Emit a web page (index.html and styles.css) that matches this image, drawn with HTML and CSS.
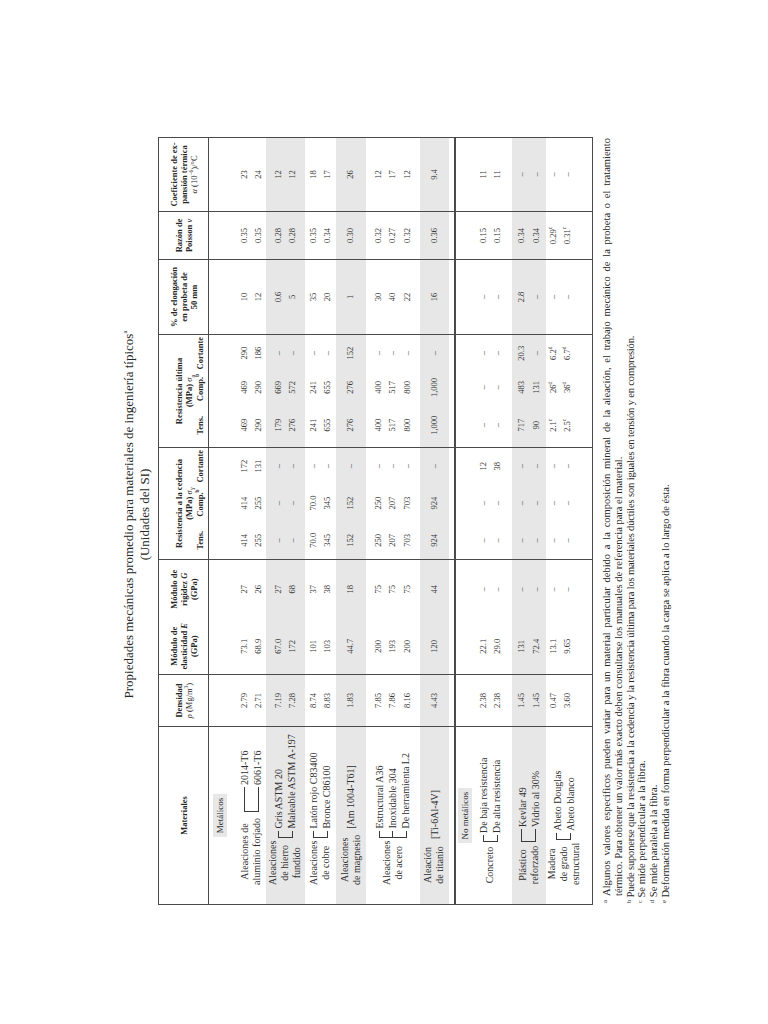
FILE: index.html
```html
<!DOCTYPE html>
<html lang="es">
<head>
<meta charset="utf-8">
<title>Propiedades mecánicas promedio</title>
<link rel="stylesheet" href="styles.css">
</head>
<body>
<div class="viewport">
<div class="sheet">
<div class="content">
  <div class="title">Propiedades mecánicas promedio para materiales de ingeniería típicos<sup class="ts">a</sup><br>(Unidades del SI)</div>
  <table class="props">
    <colgroup>
      <col class="c-mat"><col class="c-den"><col class="c-e"><col class="c-g">
      <col class="c-ct"><col class="c-cc"><col class="c-cs">
      <col class="c-ut"><col class="c-uc"><col class="c-us">
      <col class="c-el"><col class="c-po"><col class="c-co">
    </colgroup>
    <thead>
      <tr class="h1">
        <th rowspan="2" class="hb">Materiales</th>
        <th rowspan="2" class="hb bl">Densidad<br><span class="n"><i>ρ</i> (Mg/m<sup>3</sup>)</span></th>
        <th rowspan="2" class="hb bl">Módulo de<br>elasticidad <i>E</i><br>(GPa)</th>
        <th rowspan="2" class="hb">Módulo de<br>rigidez <i>G</i><br>(GPa)</th>
        <th colspan="3" class="bl grp">Resistencia a la cedencia<br>(MPa) <i class="n">σ<sub>Y</sub></i></th>
        <th colspan="3" class="bl grp">Resistencia última<br>(MPa) <i class="n">σ<sub>u</sub></i></th>
        <th rowspan="2" class="hb bl">% de elongación<br>en probeta de<br>50 mm</th>
        <th rowspan="2" class="hb bl">Razón de<br>Poisson <i class="n">ν</i></th>
        <th rowspan="2" class="hb bl">Coeficiente de ex-<br>pansión térmica<br><span class="n"><i>α</i> (10<sup>−6</sup>)/°C</span></th>
      </tr>
      <tr class="h2">
        <th class="hb bl sub">Tens.</th><th class="hb sub">Comp.<sup>b</sup></th><th class="hb sub">Cortante</th>
        <th class="hb bl sub">Tens.</th><th class="hb sub">Comp.<sup>b</sup></th><th class="hb sub">Cortante</th>
      </tr>
    </thead>
    <tbody>
      <tr class="r-sec">
        <td><span class="sec">Metálicos</span></td>
        <td></td><td></td><td></td><td></td><td></td><td></td><td></td><td></td><td></td><td></td><td></td><td></td>
      </tr>
      <tr class="r-al">
        <td><div class="m"><div class="ml">Aleaciones de<br>aluminio forjado</div><div class="brk long"></div><div class="mi">2014-T6<br>6061-T6</div></div></td>
        <td>2.79<br>2.71</td><td>73.1<br>68.9</td><td>27<br>26</td>
        <td>414<br>255</td><td>414<br>255</td><td>172<br>131</td>
        <td>469<br>290</td><td>469<br>290</td><td>290<br>186</td>
        <td>10<br>12</td><td>0.35<br>0.35</td><td>23<br>24</td>
      </tr>
      <tr class="r-fe g">
        <td><div class="m"><div class="ml fw">Aleaciones<br>de hierro<br>fundido</div><div class="brk"></div><div class="mi">Gris ASTM 20<br>Maleable ASTM A-197</div></div></td>
        <td>7.19<br>7.28</td><td>67.0<br>172</td><td>27<br>68</td>
        <td>–<br>–</td><td>–<br>–</td><td>–<br>–</td>
        <td>179<br>276</td><td>669<br>572</td><td>–<br>–</td>
        <td>0.6<br>5</td><td>0.28<br>0.28</td><td>12<br>12</td>
      </tr>
      <tr class="r-cu">
        <td><div class="m"><div class="ml fw">Aleaciones<br>de cobre</div><div class="brk"></div><div class="mi">Latón rojo C83400<br>Bronce C86100</div></div></td>
        <td>8.74<br>8.83</td><td>101<br>103</td><td>37<br>38</td>
        <td>70.0<br>345</td><td>70.0<br>345</td><td>–<br>–</td>
        <td>241<br>655</td><td>241<br>655</td><td>–<br>–</td>
        <td>35<br>20</td><td>0.35<br>0.34</td><td>18<br>17</td>
      </tr>
      <tr class="r-mg g">
        <td><div class="m"><div class="ml fw">Aleaciones<br>de magnesio</div><div class="mi solo">[Am 1004-T61]</div></div></td>
        <td>1.83</td><td>44.7</td><td>18</td>
        <td>152</td><td>152</td><td>–</td>
        <td>276</td><td>276</td><td>152</td>
        <td>1</td><td>0.30</td><td>26</td>
      </tr>
      <tr class="r-st">
        <td><div class="m"><div class="ml fw">Aleaciones<br>de acero</div><div class="brk b3"></div><div class="mi">Estructural A36<br>Inoxidable 304<br>De herramienta L2</div></div></td>
        <td>7.85<br>7.86<br>8.16</td><td>200<br>193<br>200</td><td>75<br>75<br>75</td>
        <td>250<br>207<br>703</td><td>250<br>207<br>703</td><td>–<br>–<br>–</td>
        <td>400<br>517<br>800</td><td>400<br>517<br>800</td><td>–<br>–<br>–</td>
        <td>30<br>40<br>22</td><td>0.32<br>0.27<br>0.32</td><td>12<br>17<br>12</td>
      </tr>
      <tr class="r-ti g">
        <td><div class="m"><div class="ml fw">Aleación<br>de titanio</div><div class="mi solo">[Ti-6Al-4V]</div></div></td>
        <td>4.43</td><td>120</td><td>44</td>
        <td>924</td><td>924</td><td>–</td>
        <td>1,000</td><td>1,000</td><td>–</td>
        <td>16</td><td>0.36</td><td>9.4</td>
      </tr>
      <tr class="r-gap">
        <td></td><td></td><td></td><td></td><td></td><td></td><td></td><td></td><td></td><td></td><td></td><td></td><td></td>
      </tr>
      <tr class="r-sec r-sec2">
        <td><span class="sec">No metálicos</span></td>
        <td></td><td></td><td></td><td></td><td></td><td></td><td></td><td></td><td></td><td></td><td></td><td></td>
      </tr>
      <tr class="r-co">
        <td><div class="m"><div class="ml fw">Concreto</div><div class="brk"></div><div class="mi">De baja resistencia<br>De alta resistencia</div></div></td>
        <td>2.38<br>2.38</td><td>22.1<br>29.0</td><td>–<br>–</td>
        <td>–<br>–</td><td>–<br>–</td><td>12<br>38</td>
        <td>–<br>–</td><td>–<br>–</td><td>–<br>–</td>
        <td>–<br>–</td><td>0.15<br>0.15</td><td>11<br>11</td>
      </tr>
      <tr class="r-pl g">
        <td><div class="m"><div class="ml fw">Plástico<br>reforzado</div><div class="brk mid"></div><div class="mi">Kevlar 49<br>Vidrio al 30%</div></div></td>
        <td>1.45<br>1.45</td><td>131<br>72.4</td><td>–<br>–</td>
        <td>–<br>–</td><td>–<br>–</td><td>–<br>–</td>
        <td>717<br>90</td><td>483<br>131</td><td>20.3<br>–</td>
        <td>2.8<br>–</td><td>0.34<br>0.34</td><td>–<br>–</td>
      </tr>
      <tr class="r-wd">
        <td><div class="m"><div class="ml fw">Madera<br>de grado<br>estructural</div><div class="brk"></div><div class="mi">Abeto Douglas<br>Abeto blanco</div></div></td>
        <td>0.47<br>3.60</td><td>13.1<br>9.65</td><td>–<br>–</td>
        <td>–<br>–</td><td>–<br>–</td><td>–<br>–</td>
        <td>2.1<sup>c</sup><br>2.5<sup>c</sup></td><td>26<sup>d</sup><br>36<sup>d</sup></td><td>6.2<sup>d</sup><br>6.7<sup>d</sup></td>
        <td>–<br>–</td><td>0.29<sup>c</sup><br>0.31<sup>c</sup></td><td>–<br>–</td>
      </tr>
    </tbody>
  </table>
  <div class="notes">
    <p class="fn"><span class="line just"><sup>a</sup> Algunos valores específicos pueden variar para un material particular debido a la composición mineral de la aleación, el trabajo mecánico de la probeta o el tratamiento</span><span class="line hang">térmico. Para obtener un valor más exacto deben consultarse los manuales de referencia para el material.</span></p>
    <p class="fn tight"><sup>b</sup> Puede suponerse que la resistencia a la cedencia y la resistencia última para los materiales dúctiles son iguales en tensión y en compresión.</p>
    <p class="fn"><sup>c</sup> Se mide perpendicular a la fibra.</p>
    <p class="fn"><sup>d</sup> Se mide paralela a la fibra.</p>
    <p class="fn"><sup>e</sup> Deformación medida en forma perpendicular a la fibra cuando la carga se aplica a lo largo de ésta.</p>
  </div>
</div>
</div>
</div>
</body>
</html>
```
FILE: styles.css
```css
html, body {
  margin: 0;
  padding: 0;
  background: #ffffff;
}

.viewport {
  width: 768px;
  height: 1024px;
  overflow: hidden;
}

.sheet {
  width: 1024px;
  height: 768px;
  transform-origin: 0 0;
  transform: translate(0, 1024px) rotate(-90deg);
  font-family: "Liberation Serif", "Times New Roman", serif;
  color: #2e2e2e;
}

.content {
  width: 767px;
  margin-left: 119px;
  padding-top: 121px;
}

.title {
  text-align: center;
  font-size: 13px;
  line-height: 16px;
  margin-bottom: 5px;
  padding-left: 14px;
  color: #262626;
}

.title .ts {
  font-size: 7px;
  vertical-align: top;
  line-height: 8px;
}

table.props {
  width: 767px;
  border-collapse: collapse;
  table-layout: fixed;
  border: 1.5px solid #4a4a4a;
}

.c-mat { width: 178px; }
.c-den { width: 52px; }
.c-e { width: 56px; }
.c-g { width: 59px; }
.c-ct { width: 38px; }
.c-cc { width: 37px; }
.c-cs { width: 37px; }
.c-ut { width: 44px; }
.c-uc { width: 32px; }
.c-us { width: 37px; }
.c-el { width: 75px; }
.c-po { width: 48px; }
.c-co { width: 74px; }

th {
  font-size: 8.5px;
  line-height: 10px;
  font-weight: bold;
  color: #262626;
  text-align: center;
  vertical-align: middle;
  padding: 0 1px;
}

th .n, th i.n {
  font-weight: normal;
}

th sup {
  font-size: 5.5px;
  line-height: 0;
}

th sub {
  font-size: 5.5px;
  line-height: 0;
}

tr.h1 { height: 36px; }
tr.h2 { height: 14px; }

th.grp {
  vertical-align: bottom;
  padding-bottom: 1px;
}

th.sub {
  vertical-align: top;
  padding-top: 0;
}

.hb {
  border-bottom: 1px solid #4a4a4a;
}

.bl {
  border-left: 1px solid #4a4a4a;
}

tbody td {
  padding: 0;
  font-size: 8.5px;
  line-height: 14.5px;
  text-align: center;
  vertical-align: middle;
  color: #333333;
}

tbody td:nth-child(2),
tbody td:nth-child(3),
tbody td:nth-child(5),
tbody td:nth-child(8),
tbody td:nth-child(11),
tbody td:nth-child(12),
tbody td:nth-child(13) {
  border-left: 1px solid #4a4a4a;
}

tbody td sup {
  font-size: 5.5px;
  line-height: 0;
  vertical-align: 4px;
}

tr.g td {
  background: #e7e7e7;
}

tr.r-sec { height: 23px; }
tr.r-al { height: 32px; }
tr.r-al td { padding-top: 5px; }
tr.r-fe { height: 39px; }
tr.r-cu { height: 31px; }
tr.r-mg { height: 30px; }
tr.r-st { height: 54px; }
tr.r-ti { height: 29px; }
tr.r-gap { height: 6px; }
tr.r-gap td { border-bottom: 2px solid #4a4a4a; }
tr.r-sec2 { height: 20px; }
tr.r-co { height: 37px; }
tr.r-co td { padding-bottom: 6px; }
tr.r-pl { height: 34px; }
tr.r-wd { height: 47px; }

tr.r-wd td {
  vertical-align: top;
  padding-top: 0;
}

.sec {
  display: inline-block;
  background: #e7e7e7;
  font-size: 9px;
  line-height: 12px;
  padding: 1px 4px;
  color: #2e2e2e;
}

.m {
  display: flex;
  align-items: center;
  padding-left: 19px;
  font-size: 10px;
  line-height: 12px;
  text-align: left;
  color: #2e2e2e;
}

.ml {
  flex: none;
  text-align: center;
}

.ml.fw {
  min-width: 40px;
}

.brk {
  flex: none;
  width: 6px;
  height: 13px;
  border: 1px solid #3a3a3a;
  border-right: none;
  margin: 0 2px 0 3px;
}

.brk.long {
  width: 24px;
  margin-left: 6px;
}

.brk.mid {
  width: 12px;
}

.brk.b3 {
  height: 26px;
  background: linear-gradient(#3a3a3a, #3a3a3a) no-repeat left center / 100% 1px;
}

.mi {
  flex: none;
  line-height: 13px;
  white-space: nowrap;
}

.mi.solo {
  margin-left: 6px;
}

.notes {
  margin-left: 2px;
  width: 765px;
  margin-top: 8px;
  font-size: 10.5px;
  line-height: 11.8px;
  color: #262626;
}

.fn {
  margin: 0;
  padding-left: 7px;
  text-indent: -7px;
}

.fn sup {
  font-size: 6.5px;
  vertical-align: top;
  line-height: 8px;
}

.fn .line {
  display: block;
}

.fn .just {
  text-align: justify;
  text-align-last: justify;
}

.fn .hang {
  text-indent: 0;
}

.fn.tight {
  letter-spacing: -0.15px;
}
```
